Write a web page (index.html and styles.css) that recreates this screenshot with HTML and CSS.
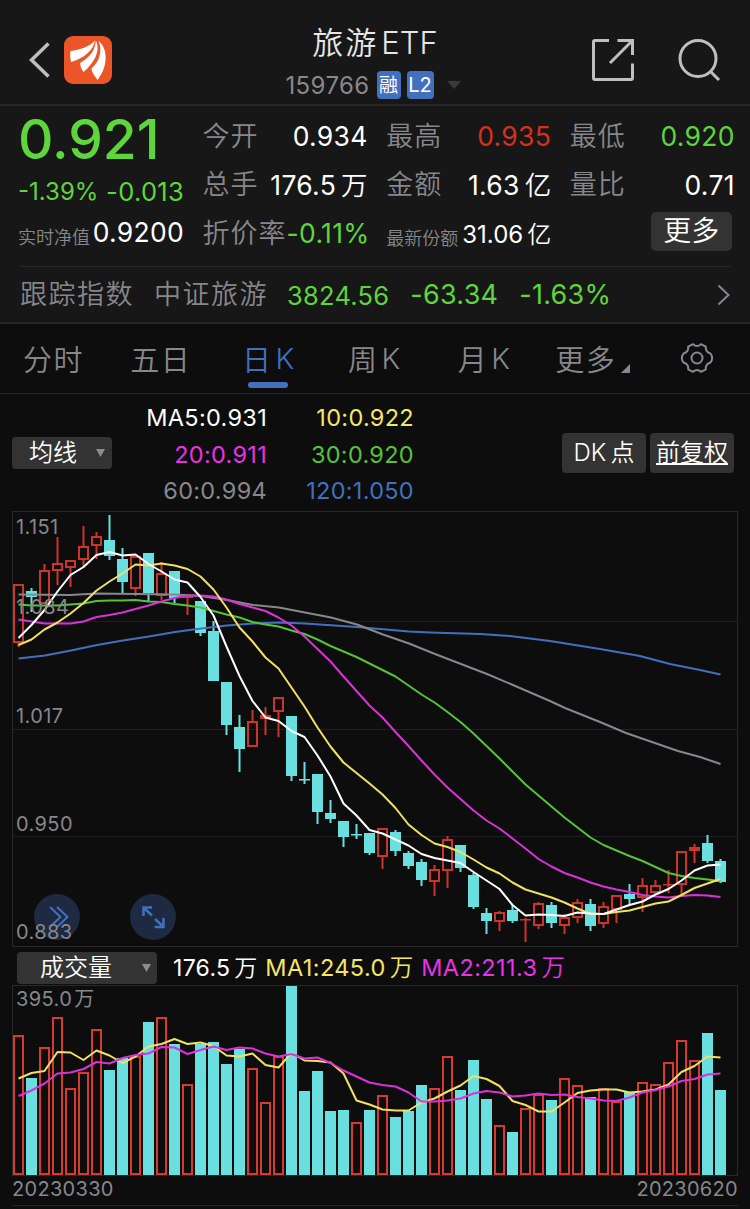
FILE: index.html
```
<!DOCTYPE html>
<html lang="zh-CN">
<head>
    <meta charset="UTF-8">
    <meta name="viewport" content="width=device-width, initial-scale=1.0">
    <title>旅游ETF 159766</title>
    <link rel="stylesheet" href="styles.css">
</head>
<body>
<header class="header">
    <div class="header-left">
        <svg class="back" width="22" height="36" viewBox="0 0 22 36"><path d="M19.500 1.500L2.500 18L19.500 34.500"/></svg>
        <svg class="logo" width="48" height="48" viewBox="0 0 48 48">
            <rect width="48" height="48" rx="9"/>
            <path d="M6.500 15C16 13.500 25.500 11 30.800 4.500C30 14 19.500 22.500 7 26C6 22 6 18 6.500 15Z"/>
            <path d="M31.800 4.500C37 14 30.500 27 19.500 36C17.500 33.500 16.300 30.500 16 27C25 22 31.500 14.500 31.800 4.500Z"/>
            <path d="M34.500 4.800C44.500 13 44 31 33.500 44C31 40 27.800 37 27.500 32.500C35 26 39 15.500 34.500 4.800Z"/>
        </svg>
    </div>
    <div class="header-title">
        <h1><span>旅游</span>ETF</h1>
        <div class="code">
            <span class="code-num">159766</span>
            <span class="badge">融</span>
            <span class="badge badge-l2">L2</span>
            <svg class="code-arrow" width="14" height="8" viewBox="0 0 14 8"><path d="M0 0H14L7 8Z"/></svg>
        </div>
    </div>
    <div class="header-right">
        <svg width="44" height="44" viewBox="0 0 44 44"><path d="M18 2.500H4Q2.500 2.500 2.500 4V40Q2.500 41.500 4 41.500H40Q41.500 41.500 41.500 40V25.500M26.500 2.500H41.500V17M41 3L19 25" /></svg>
        <svg width="44" height="44" viewBox="0 0 44 44"><circle cx="21" cy="20.500" r="18"/><path d="M33.500 33.500L42 42"/></svg>
    </div>
</header>

<section class="quote">
    <div class="quote-grid">
        <div class="quote-main">
            <div class="price">0.921</div>
            <div class="change"><span>-1.39%</span><span class="change-val">-0.013</span></div>
            <div class="cell cell-nav"><span class="label-sm">实时净值</span><span class="value">0.9200</span></div>
        </div>
        <div class="quote-col">
            <div class="cell"><span class="label">今开</span><span class="value">0.934</span></div>
            <div class="cell"><span class="label">总手</span><span class="value">176.5<i>万</i></span></div>
            <div class="cell"><span class="label">折价率</span><span class="value down">-0.11%</span></div>
        </div>
        <div class="quote-col">
            <div class="cell"><span class="label">最高</span><span class="value up">0.935</span></div>
            <div class="cell"><span class="label">金额</span><span class="value">1.63<i>亿</i></span></div>
            <div class="cell"><span class="label-sm">最新份额</span><span class="value value-sm">31.06<i>亿</i></span></div>
        </div>
        <div class="quote-col">
            <div class="cell"><span class="label">最低</span><span class="value down">0.920</span></div>
            <div class="cell"><span class="label">量比</span><span class="value">0.71</span></div>
            <div class="cell cell-more"><button class="more">更多</button></div>
        </div>
    </div>
    <div class="index-row">
        <span class="label">跟踪指数</span>
        <span class="label index-name">中证旅游</span>
        <span class="index-num">3824.56</span>
        <span class="index-num index-diff">-63.34</span>
        <span class="index-num index-diff">-1.63%</span>
        <svg class="index-arrow" width="14" height="22" viewBox="0 0 14 22"><path d="M1.500 1.500L11.500 11L1.500 20.500"/></svg>
    </div>
</section>

<nav class="tabs">
    <a class="tab">分时</a>
    <a class="tab">五日</a>
    <a class="tab active">日<b>K</b></a>
    <a class="tab">周<b>K</b></a>
    <a class="tab tab-month">月<b>K</b></a>
    <a class="tab tab-more">更多<svg class="corner" width="9" height="9" viewBox="0 0 9 9"><path d="M9 0V9H0Z"/></svg></a>
    <a class="tab tab-gear">
        <svg class="gear" width="34" height="32" viewBox="0 0 34 32">
            <path d="M13 2.200Q17 5.800 21 2.200L25.800 4.600Q25.200 10 30.500 11.500Q33.800 16 30.500 20.500Q25.200 22 25.800 27.400L21 29.800Q17 26.200 13 29.800L8.200 27.400Q8.800 22 3.500 20.500Q.2 16 3.500 11.500Q8.800 10 8.200 4.600Z"/>
            <circle cx="17" cy="16" r="5.500"/>
        </svg>
    </a>
</nav>

<section class="toolbar">
    <button class="select select-ma">均线<svg width="9" height="8" viewBox="0 0 9 8"><path d="M0 0H9L4.500 8Z"/></svg></button>
    <div class="ma-list">
        <span class="c-white">MA5:0.931</span><span class="c-yellow">10:0.922</span>
        <span class="c-magenta">20:0.911</span><span class="c-green">30:0.920</span>
        <span class="c-gray">60:0.994</span><span class="c-blue">120:1.050</span>
    </div>
    <div class="tool-buttons">
        <button class="tool">DK<i>点</i></button>
        <button class="tool tool-link">前复权</button>
    </div>
</section>

<svg id="priceChart" class="chart" width="727" height="436" viewBox="12 511 727 436"></svg>

<div class="vol-head">
    <button class="select select-vol">成交量<svg width="9" height="8" viewBox="0 0 9 8"><path d="M0 0H9L4.500 8Z"/></svg></button>
    <span class="c-white">176.5<i>万</i></span>
    <span class="c-yellow">MA1:245.0<i>万</i></span>
    <span class="c-magenta">MA2:211.3<i>万</i></span>
</div>

<svg id="volChart" class="chart" width="727" height="191" viewBox="12 985 727 191"></svg>

<footer class="dates"><span>20230330</span><span>20230620</span></footer>

<script src="chart.js"></script>
</body>
</html>
```
FILE: styles.css
```
* {
    box-sizing: border-box;
}
body {
    margin: 0;
    width: 750px;
    height: 1209px;
    overflow: hidden;
    background: #0d0d0d;
    color: #fff;
    font-family: Inter, "Noto Sans CJK SC", sans-serif;
    font-weight: 400;
}
i, b {
    font-style: normal;
    font-weight: inherit;
}
i {
    font-weight: 350;
}
button {
    border: none;
    padding: 0;
    color: #fff;
    background: #333;
    font-family: inherit;
    font-weight: 350;
    border-radius: 4px;
}
svg {
    display: block;
    flex: none;
}

/* header */
.header {
    display: grid;
    grid-template-columns: 250px 250px 250px;
    height: 106px;
    background: #171717;
    border-bottom: 2px solid #262626;
}
.header-left {
    display: flex;
    align-items: center;
    gap: 13px;
    padding: 15px 0 0 29px;
}
.back path {
    fill: none;
    stroke: #bfbfbf;
    stroke-width: 3.5;
}
.logo rect {
    fill: #ec5527;
}
.logo path {
    fill: #fff;
}
.header-title {
    display: flex;
    flex-direction: column;
    align-items: center;
    padding-top: 23px;
}
h1 {
    margin: 0;
    height: 40px;
    line-height: 40px;
    font-size: 31px;
    font-weight: 350;
    color: #e6e6e6;
}
h1 span {
    letter-spacing: 2px;
    margin-right: 3px;
}
.code {
    display: flex;
    align-items: center;
    height: 28px;
    margin-top: 8px;
    margin-left: -4px;
    color: #87878c;
    font-size: 24px;
}
.code-num {
    letter-spacing: 0.4px;
    margin-right: 7px;
}
.badge {
    width: 24px;
    height: 28px;
    line-height: 29px;
    margin-right: 6px;
    border-radius: 4px;
    background: #4270bf;
    color: #fff;
    text-align: center;
    font-size: 19px;
}
.badge-l2 {
    width: 27px;
    margin-right: 13px;
    font-size: 20px;
}
.code-arrow {
    fill: #3a3a3a;
}
.header-right {
    display: flex;
    align-items: center;
    gap: 42px;
    padding: 15px 0 0 91px;
}
.header-right svg {
    fill: none;
    stroke: #bfbfbf;
    stroke-width: 3;
}

/* quote */
.quote {
    height: 218px;
    background: #171717;
    border-bottom: 2px solid #262626;
    padding: 0 15px 0 19px;
}
.quote-grid {
    display: grid;
    grid-template-columns: 165px 165px 165px 165px;
    column-gap: 18.6px;
    height: 160px;
    padding-top: 5px;
}
.quote-col {
    padding-top: 1px;
}
.quote-col .cell {
    height: 48.5px;
}
.cell {
    display: flex;
    justify-content: space-between;
    align-items: center;
    white-space: nowrap;
}
.label {
    color: #87878c;
    font-size: 27px;
    font-weight: 350;
    letter-spacing: 1px;
    line-height: 38px;
    padding-top: 1px;
}
.label-sm {
    color: #87878c;
    font-size: 18px;
    font-weight: 350;
    padding-top: 8px;
}
.value {
    font-size: 26.5px;
    line-height: 38px;
    letter-spacing: 0.3px;
}
.value i {
    margin-left: 5px;
    letter-spacing: 0;
}
.value-sm {
    font-size: 24px;
    padding-top: 3px;
    letter-spacing: 0;
}
.value-sm i {
    margin-left: 4px;
}
.up {
    color: #d8301f;
}
.down {
    color: #5fd53c;
}
.price {
    height: 56px;
    line-height: 56px;
    font-size: 55px;
    font-weight: 550;
    color: #5fd53c;
    margin-left: -1px;
}
.change {
    display: flex;
    justify-content: space-between;
    height: 46px;
    line-height: 49px;
    font-size: 24px;
    margin-left: -1px;
    color: #5fd53c;
}
.change-val {
    font-size: 25.5px;
    letter-spacing: 0.3px;
}
.cell-nav {
    height: 38px;
}
.cell-nav .label-sm {
    margin-left: -1px;
}
.quote-col .cell-more {
    justify-content: flex-end;
    padding-right: 3px;
    padding-bottom: 4px;
}
.more {
    width: 81px;
    height: 39px;
    line-height: 38px;
    font-size: 28px;
    border-radius: 5px;
}
.index-row {
    display: flex;
    align-items: center;
    height: 56px;
    margin-right: 4px;
    border-top: 1px solid #262626;
}
.index-row .label {
    letter-spacing: 1.5px;
    margin-left: 1px;
}
.index-row .index-name {
    margin: 0 19px 0 20px;
}
.index-num {
    margin-right: 21px;
    padding-top: 1px;
    font-size: 25.5px;
    letter-spacing: 0.25px;
    color: #5fd53c;
}
.index-diff {
    padding-top: 0;
    font-size: 27px;
}
.index-arrow {
    margin-left: auto;
    fill: none;
    stroke: #87878c;
    stroke-width: 2;
}

/* tabs */
.tabs {
    display: grid;
    grid-template-columns: repeat(7, 1fr);
    height: 70px;
    border-bottom: 1px solid #262626;
}
.tab {
    display: flex;
    justify-content: center;
    align-items: center;
    position: relative;
    padding-bottom: 2px;
    color: #87878c;
    font-size: 29px;
    font-weight: 350;
    letter-spacing: 1.5px;
}
.tab b {
    margin-left: 3px;
    padding-top: 1px;
}
.tab-month {
    padding-left: 5px;
}
.tab-more {
    padding-left: 7px;
}
.tab-gear {
    padding-left: 2px;
}
.active {
    padding-left: 2px;
    color: #4270bf;
}
.active::after {
    content: "";
    position: absolute;
    left: 34px;
    bottom: 5px;
    width: 40px;
    height: 6px;
    border-radius: 3px;
    background: #4270bf;
}
.corner {
    align-self: flex-end;
    margin: 0 0 18px 5px;
    fill: #87878c;
}
.gear {
    fill: none;
    stroke: #87878c;
    stroke-width: 2;
}

/* toolbar */
.toolbar {
    display: flex;
    align-items: center;
    height: 117px;
    padding: 0 16px 0 12px;
}
.select {
    display: flex;
    align-items: center;
    justify-content: space-between;
    height: 32px;
    line-height: 32px;
    font-size: 24px;
}
.select svg {
    fill: #8c8c90;
}
.select-ma {
    width: 100px;
    padding: 0 7px 0 17px;
}
.ma-list {
    display: grid;
    grid-template-columns: 155px 147px;
    grid-auto-rows: 36.5px;
    align-items: center;
    padding-top: 3px;
    text-align: right;
    font-size: 23.5px;
    letter-spacing: 0.3px;
}
.tool-buttons {
    display: flex;
    gap: 4px;
    margin-left: auto;
}
.tool {
    width: 84px;
    height: 40px;
    line-height: 40px;
    font-size: 24px;
}
.tool i {
    margin-left: 4px;
}
.tool-link {
    text-decoration: underline;
    text-underline-offset: 2px;
}
.c-white { color: #fff; }
.c-yellow { color: #f5e663; }
.c-magenta { color: #e832e8; }
.c-green { color: #55c23a; }
.c-gray { color: #87878c; }
.c-blue { color: #4270bf; }

/* charts */
.chart {
    margin-left: 12px;
}
.frame {
    fill: none;
    stroke: #292929;
}
.grid {
    stroke: #1f1f1f;
}
.line {
    fill: none;
    stroke-width: 2;
    stroke-linejoin: round;
}
.axis {
    fill: #87878c;
    font-size: 20px;
    letter-spacing: 0.4px;
}
.fab {
    fill: #1d2a41;
}
.fab-icon {
    fill: none;
    stroke: #4270bf;
    stroke-width: 2.5;
}
.fab-thin {
    stroke-width: 2;
}
.vol-head {
    display: flex;
    align-items: center;
    height: 38px;
    padding: 3px 0 0 17px;
    font-size: 23px;
    letter-spacing: 0.3px;
}
.vol-head > span {
    margin-right: 8px;
    line-height: 32px;
    white-space: nowrap;
}
.vol-head i {
    margin-left: 4px;
    letter-spacing: 0;
}
.vol-head .c-yellow {
    font-size: 23.5px;
    letter-spacing: 0.4px;
}
.vol-head .c-magenta {
    font-size: 23.5px;
    letter-spacing: 0.4px;
}
.vol-head .select {
    width: 140px;
    margin-right: 16px;
    padding: 0 6px 0 23px;
}
.dates {
    display: flex;
    justify-content: space-between;
    height: 30px;
    line-height: 26px;
    margin: 0 12px;
    border-bottom: 1px solid #262626;
    color: #87878c;
    font-size: 20px;
    letter-spacing: 0.3px;
}
```
FILE: chart.js
```
const UP = '#cd342a';
const DOWN = '#69e0df';
const STEP = 13;
const X0 = 18.5;

// u/d, high, body top, body bottom, low
const candles = [
    ['u', 584, 584, 643, 647], ['d', 588, 591, 597, 612], ['u', 564, 570, 604, 604], ['u', 537, 563, 571, 585],
    ['u', 560, 560, 568, 587], ['u', 526, 546, 560, 567], ['u', 532, 536, 546, 559], ['d', 515, 540, 556, 560],
    ['d', 548, 559, 582, 594], ['u', 556, 556, 589, 596], ['d', 553, 553, 593, 601], ['u', 562, 573, 596, 600],
    ['d', 571, 571, 598, 603], ['u', 594, 596, 598, 615], ['d', 601, 601, 633, 636], ['d', 621, 631, 681, 681],
    ['d', 682, 682, 725, 735], ['d', 715, 727, 749, 772], ['u', 710, 721, 747, 747], ['u', 707, 715, 719, 735],
    ['u', 697, 697, 712, 737], ['d', 716, 716, 776, 781], ['d', 762, 779, 780, 784], ['d', 774, 774, 812, 824],
    ['d', 800, 813, 819, 823], ['d', 821, 821, 837, 847], ['d', 824, 834, 835, 839], ['d', 833, 833, 853, 855],
    ['u', 828, 828, 857, 869], ['d', 830, 832, 851, 856], ['d', 851, 853, 866, 869], ['d', 859, 862, 880, 886],
    ['u', 865, 869, 882, 896], ['u', 836, 839, 871, 888], ['d', 845, 845, 868, 872], ['d', 873, 875, 907, 909],
    ['d', 908, 913, 921, 934], ['u', 911, 912, 922, 931], ['d', 905, 910, 921, 923], ['u', 918, 919, 920, 942],
    ['u', 902, 903, 926, 929], ['d', 902, 905, 923, 928], ['u', 914, 917, 926, 934], ['u', 899, 902, 918, 923],
    ['d', 899, 904, 926, 931], ['u', 902, 906, 924, 928], ['u', 895, 895, 910, 923], ['d', 884, 894, 899, 905],
    ['u', 878, 885, 898, 912], ['u', 880, 885, 893, 895], ['u', 870, 884, 885, 893], ['u', 851, 851, 885, 895],
    ['u', 844, 847, 851, 863], ['d', 835, 843, 861, 863], ['d', 859, 861, 882, 883]
];

const ma5 = [638, 625, 610, 591.5, 575, 567, 555, 552, 555.5, 554.5, 564, 571.5, 579.5, 582.5, 597, 615.5, 646.5, 676, 701, 717.5, 721, 731, 737, 755.5, 776.5, 803.5, 815.5, 830, 833.5, 839.5, 845.5, 854, 858, 860.5, 863, 872, 880.5, 889, 905, 915.5, 914.5, 915, 916, 912.5, 913.5, 914, 909.5, 905, 901.5, 894.5, 889, 880.5, 870.5, 865.5, 864.5];
const ma10 = [645, 639.5, 629.5, 622.5, 613.5, 603, 590.5, 581.5, 573.5, 564.5, 565.5, 563.5, 565.5, 569, 576.5, 589.5, 607.5, 627.5, 641.5, 657.5, 668.5, 687.5, 706.5, 727.5, 746.5, 762.5, 773, 783.5, 794.5, 808, 824.5, 835, 843.5, 847, 852, 859.5, 867.5, 873.5, 882.5, 889.5, 893.5, 897.5, 902.5, 908.5, 914, 914, 912, 910.5, 907, 903.5, 901.5, 895, 888, 883.5, 879];
const ma20 = [619.5, 621.5, 623.5, 623.5, 623.5, 621.5, 617, 615, 612.5, 609, 605.5, 601.5, 598, 595.5, 595.5, 596.5, 599.5, 604, 607.5, 611, 617.5, 625.5, 636.5, 649, 661.5, 676.5, 691, 705.5, 717.5, 732, 746, 760.5, 774.5, 787.5, 799, 810.5, 820.5, 828.5, 838.5, 848.5, 859, 866.5, 873, 877.5, 882.5, 886.5, 889.5, 892, 895, 896.5, 897.5, 896, 895, 895.5, 897];
const ma30 = [604.5, 605.5, 605.5, 605.5, 604.5, 603.5, 601, 600.5, 600.5, 600, 601.5, 602, 604, 605.5, 607.5, 611, 614.5, 617.5, 622, 624.5, 626.5, 630.5, 634, 639.5, 646, 651.5, 657, 663.5, 670, 676.5, 685.5, 694.5, 702.5, 712, 722, 733.5, 746, 758.5, 771.5, 784.5, 795.5, 806.5, 817.5, 827.5, 837.5, 845, 850.5, 856, 861, 867, 873, 876, 878, 879.5, 881];
// the long averages are sampled, [x, y]
const ma60 = [[18.5, 594.5], [70, 595], [97, 593.5], [175, 594.5], [201, 596], [227, 600], [253, 605], [279, 607.5], [305, 612.5], [331, 617.5], [357, 624.5], [383, 634.5], [409, 643.5], [435, 654], [461, 664], [487, 674], [513, 685], [550, 701], [565, 708], [600, 722], [626, 733], [652, 742], [678, 751], [700, 757], [720.5, 764]];
const ma120 = [[18.5, 658.5], [45, 655.5], [71, 650.5], [97, 645], [123, 640.5], [149, 636.5], [175, 632], [201, 628.5], [227, 625.5], [253, 623.5], [279, 622.5], [305, 623.5], [357, 627], [409, 631.5], [430, 632.5], [480, 634], [510, 636], [550, 641], [600, 649], [640, 656], [670, 664], [700, 670], [720.5, 674.5]];

const volTops = [1035, 1078, 1047, 1017, 1088, 1072, 1029, 1070, 1058, 1056, 1022, 1017, 1044, 1084, 1044, 1042, 1064, 1049, 1068, 1102, 1056, 986, 1091, 1071, 1111, 1110, 1122, 1110, 1095, 1117, 1111, 1085, 1088, 1056, 1090, 1060, 1099, 1125, 1132, 1108, 1094, 1100, 1078, 1085, 1097, 1088, 1101, 1092, 1082, 1084, 1062, 1040, 1060, 1033, 1090];
const volMa1 = [1078.5, 1073, 1071, 1052, 1052.5, 1060, 1050.5, 1055.5, 1063, 1056.5, 1046.5, 1044, 1039, 1044, 1042.5, 1046, 1055.5, 1056.5, 1053.5, 1065, 1067.5, 1053, 1060.5, 1061, 1062.5, 1073.5, 1100.5, 1104.5, 1109.5, 1110.5, 1110.5, 1102.5, 1098.5, 1091.5, 1085.5, 1076, 1079, 1086, 1101, 1105, 1111.5, 1111.5, 1102.5, 1093, 1090.5, 1089.5, 1089.5, 1092.5, 1091.5, 1089.5, 1084.5, 1072, 1066, 1056.5, 1057.5];
const volMa2 = [1096, 1090.5, 1083.5, 1073.5, 1072.5, 1069, 1062, 1063.5, 1058, 1055, 1053.5, 1047, 1047.5, 1054, 1050, 1046.5, 1050, 1047.5, 1048.5, 1053.5, 1056.5, 1054, 1058.5, 1057.5, 1063, 1070.5, 1076.5, 1082.5, 1085, 1086.5, 1092.5, 1101.5, 1101.5, 1100.5, 1098.5, 1093.5, 1091, 1092.5, 1096.5, 1095.5, 1093.5, 1095, 1094.5, 1097, 1098.5, 1100.5, 1101, 1097.5, 1092.5, 1090, 1086.5, 1081, 1079, 1074.5, 1073.5];

function line(data, color) {
    const points = data.map((v, i) => Array.isArray(v) ? v.join(',') : `${X0 + i * STEP},${v}`);
    return `<polyline class="line" stroke="${color}" points="${points.join(' ')}"/>`;
}

function bar(x, top, bottom, up, color) {
    if (up && bottom - top > 5) {
        return `<rect x="${x + 1}" y="${top + 1}" width="9" height="${bottom - top - 2}" fill="none" stroke="${color}" stroke-width="2"/>`;
    }
    return `<rect x="${x}" y="${top}" width="11" height="${bottom - top}" fill="${color}"/>`;
}

function drawPrice() {
    let s = '<rect class="frame" x="12.5" y="511.5" width="725" height="435"/>';
    [621.5, 729.5, 836.5].forEach(y => {
        s += `<line class="grid" x1="13" x2="737" y1="${y}" y2="${y}"/>`;
    });
    candles.forEach(([type, high, top, bottom, low], i) => {
        const x = X0 + i * STEP;
        const color = type === 'u' ? UP : DOWN;
        s += `<path d="M${x} ${high}V${top}M${x} ${bottom}V${low}" stroke="${color}" stroke-width="2"/>`;
        s += bar(x - 5.5, top, Math.max(bottom, top + 1.5), type === 'u', color);
    });
    s += line(ma120, '#4270bf') + line(ma60, '#87878c') + line(ma30, '#55c23a');
    s += line(ma20, '#d932d9') + line(ma10, '#f0e163') + line(ma5, '#fff');
    // round buttons over the chart
    s += '<circle class="fab" cx="57" cy="917" r="23"/><circle class="fab" cx="153" cy="917" r="23"/>';
    s += '<path class="fab-icon fab-thin" d="M50 907L60.500 917L50 927M57 907L67.500 917L57 927"/>';
    s += '<path class="fab-icon" d="M152 907.500H143.500V916M144 908L152 915.500M154.500 927H163.500V918M163 926.500L155 919"/>';
    [[534, '1.151'], [614, '1.084'], [723, '1.017'], [831, '0.950'], [939, '0.883']].forEach(([y, t]) => {
        s += `<text class="axis" x="16" y="${y}">${t}</text>`;
    });
    document.getElementById('priceChart').innerHTML = s;
}

function drawVolume() {
    let s = '<rect class="frame" x="12.5" y="985.5" width="725" height="190"/>';
    volTops.forEach((top, i) => {
        // a flat day closed above the previous one
        const up = candles[i][0] === 'u' || i === 26;
        s += bar(X0 + i * STEP - 5.5, top, 1175, up, up ? '#d83a30' : DOWN);
    });
    s += line(volMa1, '#f0e163') + line(volMa2, '#d932d9');
    s += '<text class="axis" x="16" y="1006">395.0<tspan dx="2">万</tspan></text>';
    document.getElementById('volChart').innerHTML = s;
}

drawPrice();
drawVolume();
```
